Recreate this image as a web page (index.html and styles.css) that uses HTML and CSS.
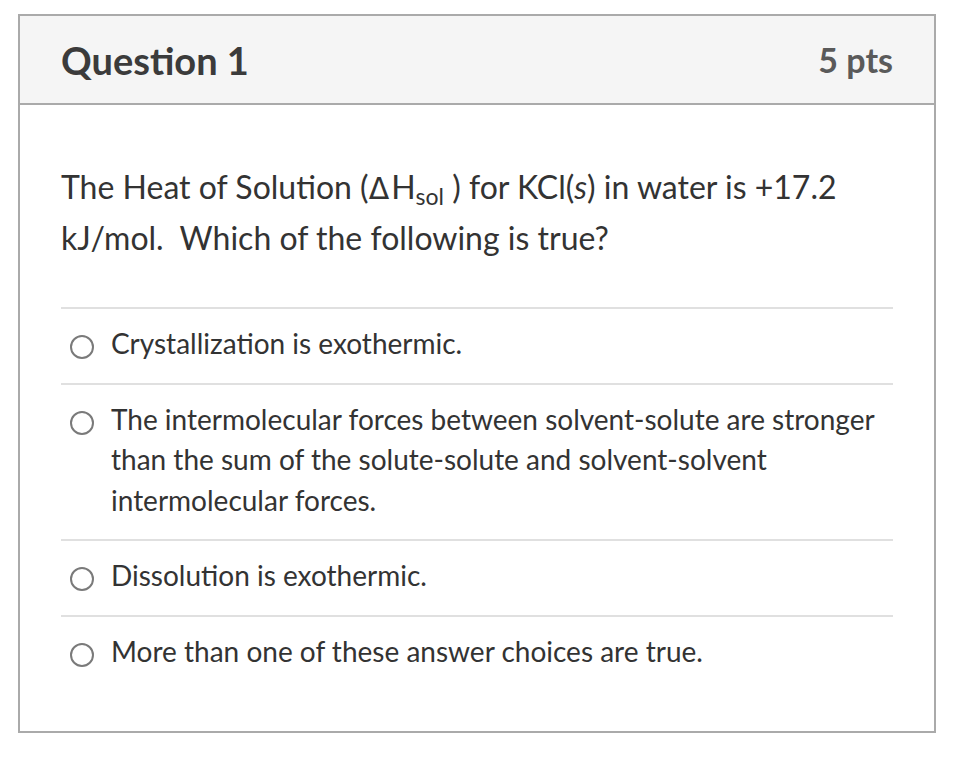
FILE: index.html
```html
<!DOCTYPE html>
<html>
<head>
<meta charset="utf-8">
<link rel="stylesheet" href="styles.css">
</head>
<body>
<div class="card">
  <div class="header">
    <span class="title">Question 1</span>
    <span class="pts">5 pts</span>
  </div>
  <div class="body">
    <p class="question">The Heat of Solution (<span class="delta">Δ</span>H<sub>sol</sub> ) for KCl(<i>s</i>) in water is +17.2 kJ/mol.&nbsp; Which of the following is true?</p>
    <div class="answers">
      <div class="answer"><span class="radio"></span><span class="label">Crystallization is exothermic.</span></div>
      <div class="answer"><span class="radio"></span><span class="label">The intermolecular forces between solvent-solute are stronger than the sum of the solute-solute and solvent-solvent intermolecular forces.</span></div>
      <div class="answer"><span class="radio"></span><span class="label">Dissolution is exothermic.</span></div>
      <div class="answer"><span class="radio"></span><span class="label">More than one of these answer choices are true.</span></div>
    </div>
  </div>
</div>
</body>
</html>
```

FILE: styles.css
```css
html, body {
  margin: 0;
  padding: 0;
  background: #ffffff;
}
body {
  padding: 14px 0 0 18px;
  font-family: Lato, "Liberation Sans", sans-serif;
  color: #333333;
}
.card {
  width: 914px;
  border: 2px solid #aaaaaa;
  box-sizing: content-box;
}
.header {
  height: 87px;
  background: #f5f5f5;
  border-bottom: 2px solid #aaaaaa;
  display: flex;
  align-items: center;
  justify-content: space-between;
  padding: 0 41px;
}
.title {
  font-size: 38px;
  font-weight: 700;
  color: #3b3b3b;
}
.pts {
  font-size: 34px;
  font-weight: 700;
  color: #5a5a5a;
}
.body {
  padding: 57px 41px 41px 41px;
}
.question {
  margin: 0;
  font-size: 32px;
  line-height: 49px;
  max-width: 832px;
}
.delta {
  font-family: "DejaVu Sans", sans-serif;
  font-size: 30px;
  margin-right: 2px;
}
.question sub {
  font-size: 23px;
  line-height: 0;
  vertical-align: -6px;
}
.answers {
  margin-top: 45px;
}
.answer {
  display: flex;
  align-items: flex-start;
  border-top: 2px solid #e0e0e0;
  padding: 14px 0 19px 0;
  font-size: 28px;
  line-height: 40.5px;
}
.radio {
  flex: 0 0 auto;
  width: 20px;
  height: 20px;
  border: 2px solid #7a7a7a;
  border-radius: 50%;
  margin: 12px 17px 0 9px;
}
.label {
  flex: 1 1 auto;
}
```
